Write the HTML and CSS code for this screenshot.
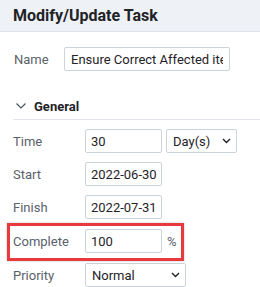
FILE: index.html
```html
<!DOCTYPE html>
<html lang="en">

<head>
    <meta charset="UTF-8">
    <meta name="viewport" content="width=device-width, initial-scale=1.0">
    <title>Modify/Update Task</title>
    <link rel="stylesheet" href="styles.css">
</head>

<body>
    <div class="panel-header">
        <h1>Modify/Update Task</h1>
    </div>

    <div class="panel-body">
        <div class="field name-field">
            <label for="task-name">Name</label>
            <input id="task-name" class="text-input name-input" type="text" value="Ensure Correct Affected items are listed">
        </div>

        <div class="section-title">
            <svg class="section-chevron" width="10" height="6" viewBox="0 0 10 6">
                <path d="M0.5 0.5 L5 5 L9.5 0.5" fill="none" stroke="#4a5059" stroke-width="1.1"/>
            </svg>
            <span>General</span>
        </div>

        <div class="field">
            <label for="task-time">Time</label>
            <input id="task-time" class="text-input" type="text" value="30">
            <div class="select-wrap unit-select">
                <select>
                    <option>Day(s)</option>
                    <option>Hour(s)</option>
                </select>
                <svg class="select-chevron" width="9" height="6" viewBox="0 0 9 6">
                    <path d="M1 1 L4.5 4.5 L8 1" fill="none" stroke="#1f2328" stroke-width="1.4"/>
                </svg>
            </div>
        </div>

        <div class="field">
            <label for="task-start">Start</label>
            <input id="task-start" class="text-input" type="text" value="2022-06-30">
        </div>

        <div class="field">
            <label for="task-finish">Finish</label>
            <input id="task-finish" class="text-input" type="text" value="2022-07-31">
        </div>

        <div class="field highlight">
            <label for="task-complete">Complete</label>
            <input id="task-complete" class="text-input" type="text" value="100">
            <span class="unit">%</span>
        </div>

        <div class="field">
            <label for="task-priority">Priority</label>
            <div class="select-wrap priority-select">
                <select id="task-priority">
                    <option>Normal</option>
                    <option>High</option>
                    <option>Low</option>
                </select>
                <svg class="select-chevron" width="9" height="6" viewBox="0 0 9 6">
                    <path d="M1 1 L4.5 4.5 L8 1" fill="none" stroke="#1f2328" stroke-width="1.4"/>
                </svg>
            </div>
        </div>
    </div>
</body>

</html>
```

FILE: styles.css
```css
/* General */
body {
    font-family: Roboto, 'Noto Sans', sans-serif;
    font-size: 13px;
    color: #1f2328;
    background-color: #ffffff;
    margin: 0;
    width: 260px;
    overflow: hidden;
}

/* Header */
.panel-header {
    height: 32px;
    background-color: #eef1f6;
    border-bottom: 1px solid #dfe3ea;
    box-sizing: border-box;
    padding-left: 13px;
    display: flex;
    align-items: center;
}

.panel-header h1 {
    margin: 0;
    font-size: 16px;
    font-weight: bold;
    color: #1f2328;
}

.panel-body {
    padding-left: 13px;
}

/* Rows */
.field {
    display: flex;
    align-items: center;
    height: 24px;
    margin-bottom: 9px;
}

.field label {
    width: 72px;
    color: #5a616b;
}

.name-field {
    margin-top: 15px;
    margin-bottom: 0;
}

.name-field label {
    width: 50px;
    padding-left: 1px;
}

.text-input {
    box-sizing: border-box;
    width: 77px;
    height: 24px;
    padding: 0 3px 0 5px;
    border: 1px solid #cdd3db;
    border-radius: 2px;
    font-family: inherit;
    font-size: 13px;
    color: #1f2328;
    outline: none;
}

.name-input {
    width: 166px;
    padding: 0 6px;
}

/* Section title */
.section-title {
    display: flex;
    align-items: center;
    height: 24px;
    margin-top: 23px;
    padding-bottom: 1px;
    border-bottom: 1px solid #e1e4ea;
    margin-bottom: 9px;
    font-size: 13px;
    font-weight: bold;
}

.section-chevron {
    margin-left: 3px;
    margin-right: 8px;
}

/* Selects */
.select-wrap {
    position: relative;
    height: 24px;
}

.select-wrap select {
    appearance: none;
    box-sizing: border-box;
    height: 24px;
    width: 100%;
    padding: 0 6px;
    border: 1px solid #cdd3db;
    border-radius: 2px;
    background-color: #ffffff;
    font-family: inherit;
    font-size: 13px;
    color: #1f2328;
    outline: none;
}

.select-chevron {
    position: absolute;
    right: 6px;
    top: 9px;
}

.unit-select {
    width: 71px;
    margin-left: 4px;
}

.priority-select {
    width: 101px;
}

.unit {
    margin-left: 5px;
    color: #5a616b;
}

/* Highlight box */
.highlight {
    box-sizing: border-box;
    height: 38px;
    width: 177px;
    border: 3px solid #e8393f;
    margin-left: -6px;
    padding: 3px 0 5px 3px;
    box-shadow: 0 0 2px rgba(0, 0, 0, 0.25);
    margin-top: -5px;
    margin-bottom: 2px;
}
```
